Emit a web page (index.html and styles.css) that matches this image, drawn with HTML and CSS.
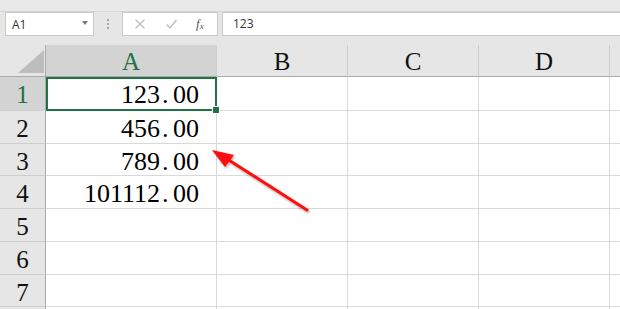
FILE: index.html
```html
<!DOCTYPE html>
<html>
<head>
<meta charset="utf-8">
<link rel="stylesheet" href="styles.css">
</head>
<body>
<div class="app">
  <div class="topband"></div>
  <div class="fbar">
    <div class="namebox"><span class="nb-text">A1</span><span class="caret"></span></div>
    <div class="grip"><i></i><i></i><i></i></div>
    <div class="fxbox">
      <svg class="ico" width="12" height="12" viewBox="0 0 12 12"><path d="M1.5 1.5 L10.5 10.5 M10.5 1.5 L1.5 10.5" stroke="#bdbdbd" stroke-width="1.3" fill="none"/></svg>
      <svg class="ico" width="13" height="12" viewBox="0 0 13 12"><path d="M1.5 6.5 L5 10 L11.5 2" stroke="#bdbdbd" stroke-width="1.4" fill="none"/></svg>
      <span class="fx">f<sub>x</sub></span>
    </div>
    <div class="finput">123</div>
  </div>
  <div class="sheet">
    <div class="corner"><span class="tri"></span></div>
    <div class="ch sel">A</div>
    <div class="ch">B</div>
    <div class="ch">C</div>
    <div class="ch">D</div>
    <div class="ch last"></div>

    <div class="rh sel">1</div>
    <div class="c num active">123<span class="dot">.</span>00</div>
    <div class="c"></div><div class="c"></div><div class="c"></div><div class="c last"></div>

    <div class="rh">2</div>
    <div class="c num">456<span class="dot">.</span>00</div>
    <div class="c"></div><div class="c"></div><div class="c"></div><div class="c last"></div>

    <div class="rh">3</div>
    <div class="c num">789<span class="dot">.</span>00</div>
    <div class="c"></div><div class="c"></div><div class="c"></div><div class="c last"></div>

    <div class="rh">4</div>
    <div class="c num">101112<span class="dot">.</span>00</div>
    <div class="c"></div><div class="c"></div><div class="c"></div><div class="c last"></div>

    <div class="rh">5</div>
    <div class="c"></div><div class="c"></div><div class="c"></div><div class="c"></div><div class="c last"></div>

    <div class="rh">6</div>
    <div class="c"></div><div class="c"></div><div class="c"></div><div class="c"></div><div class="c last"></div>

    <div class="rh">7</div>
    <div class="c"></div><div class="c"></div><div class="c"></div><div class="c"></div><div class="c last"></div>

    <div class="rh"></div>
    <div class="c"></div><div class="c"></div><div class="c"></div><div class="c"></div><div class="c last"></div>
  </div>
  <svg class="arrow" width="620" height="309" viewBox="0 0 620 309">
    <defs>
      <filter id="sh" x="-20%" y="-20%" width="140%" height="140%">
        <feDropShadow dx="1" dy="1.5" stdDeviation="1.2" flood-color="#000" flood-opacity="0.35"/>
      </filter>
    </defs>
    <g filter="url(#sh)">
      <line x1="307" y1="210" x2="224" y2="157" stroke="#ff1010" stroke-width="3" stroke-linecap="round"/>
      <polygon points="212,150 234,155 225,167" fill="#ff1010"/>
    </g>
  </svg>
</div>
</body>
</html>
```

FILE: styles.css
```css
* { box-sizing: border-box; }
html, body { margin: 0; padding: 0; }
body { width: 620px; height: 309px; overflow: hidden; background: #e6e6e6; }

.app {
  position: relative;
  width: 620px;
  height: 309px;
  overflow: hidden;
  background: #e6e6e6;
  font-family: "Open Sans", "Noto Sans", sans-serif;
}

.topband {
  height: 12px;
  background: #e9e9e9;
  border-bottom: 1px solid #d6d6d6;
}

.fbar {
  display: flex;
  align-items: stretch;
  height: 24px;
  padding-left: 5px;
  margin-bottom: 9px;
}

.namebox, .fxbox, .finput {
  background: #fff;
  border: 1px solid #c9c9c9;
  height: 24px;
}

.namebox {
  width: 89px;
  display: flex;
  align-items: center;
  justify-content: space-between;
  padding: 0 5px 0 6px;
  font-size: 12px;
  color: #333;
}

.caret {
  width: 0; height: 0;
  border-left: 3.5px solid transparent;
  border-right: 3.5px solid transparent;
  border-top: 4px solid #777;
  margin-top: -2px;
}

.grip {
  width: 28px;
  display: flex;
  flex-direction: column;
  align-items: center;
  justify-content: center;
  gap: 2px;
}
.grip i {
  display: block;
  width: 2px; height: 2px;
  background: #aaa;
}

.fxbox {
  width: 96px;
  display: flex;
  align-items: center;
  padding-left: 11px;
  gap: 19px;
}
.fx {
  font-family: "Liberation Serif", serif;
  font-style: italic;
  font-size: 13px;
  color: #555;
  margin-left: -1px;
  line-height: 1;
}
.fx sub { font-size: 9px; vertical-align: -1px; }

.finput {
  flex: 1;
  margin-left: 4px;
  border-right: none;
  padding-left: 10px;
  font-size: 12px;
  line-height: 22px;
  color: #333;
}

.sheet {
  display: grid;
  grid-template-columns: 46px 171px 131px 131px 131px 10px;
  grid-template-rows: 32px 34px 33px 32px 33px 33px 33px 32px 20px;
  background: #fff;
  font-family: "Liberation Serif", "DejaVu Serif", serif;
}

.corner {
  background: #e6e6e6;
  border-right: 1px solid #ababab;
  border-bottom: 1px solid #ababab;
  position: relative;
}
.tri {
  position: absolute;
  right: 1px;
  bottom: 3px;
  width: 0; height: 0;
  border-left: 26px solid transparent;
  border-bottom: 23px solid #bdbdbd;
}

.ch {
  background: #e6e6e6;
  border-right: 1px solid #cdcdcd;
  border-bottom: 1px solid #ababab;
  text-align: center;
  font-size: 25px;
  line-height: 24px;
  padding-top: 5px;
  color: #111;
}
.ch.sel { background: #d3d3d3; color: #217346; }
.ch.last { border-right: none; }

.rh {
  background: #e6e6e6;
  border-right: 1px solid #ababab;
  border-bottom: 1px solid #cdcdcd;
  text-align: center;
  font-size: 25px;
  line-height: 24px;
  padding-top: 6px;
  color: #111;
}
.rh.sel { background: #d3d3d3; color: #217346; }

.c {
  border-right: 1px solid #d9d9d9;
  border-bottom: 1px solid #d9d9d9;
  background: #fff;
}
.c.last { border-right: none; }

.num {
  text-align: right;
  padding-right: 17px;
  padding-top: 6px;
  font-size: 26px;
  line-height: 24px;
  color: #000;
}
.dot {
  display: inline-block;
  width: 13px;
  text-align: left;
  padding-left: 2px;
}

.active { position: relative; }
.active::after {
  content: "";
  position: absolute;
  left: 0; top: 0; right: -1px; bottom: -1px;
  border: 2px solid #217346;
}
.active::before {
  content: "";
  position: absolute;
  right: -4px; bottom: -4px;
  width: 6px; height: 6px;
  background: #217346;
  border: 1px solid #fff;
  z-index: 2;
}

.arrow {
  position: absolute;
  left: 0; top: 0;
  pointer-events: none;
}
```
